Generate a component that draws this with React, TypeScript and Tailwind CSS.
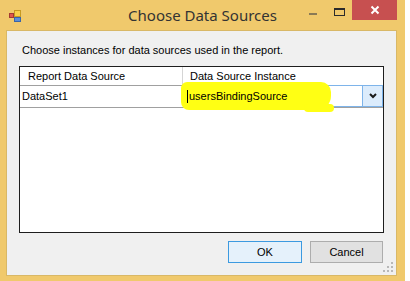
import React from "react";

function FormIcon() {
  return (
    <svg width="13" height="13" viewBox="0 0 13 13">
      <rect x="0.5" y="3.5" width="4" height="4" fill="#e0574c" stroke="#a33a32" />
      <rect x="5.5" y="0.5" width="6" height="6" fill="#f8d04a" stroke="#c79a22" />
      <rect x="5.5" y="7.5" width="6" height="4" fill="#5b8fd6" stroke="#3a64a8" />
    </svg>
  );
}

function SizeGrip() {
  const dots = [
    [8, 0],
    [4, 4],
    [8, 4],
    [0, 8],
    [4, 8],
    [8, 8],
  ];
  return (
    <svg width="11" height="11" viewBox="0 0 11 11">
      {dots.map(([x, y], i) => (
        <rect key={i} x={x} y={y} width="2" height="2" fill="#b8b8b8" />
      ))}
    </svg>
  );
}

export default function App() {
  const ui = { fontFamily: '"Liberation Sans", Arial, sans-serif' };

  return (
    <div className="w-[410px] h-[281px] bg-white overflow-hidden" style={ui}>
      <div className="w-[405px] h-[281px] bg-[#f0c96c] flex flex-col">
        {/* Title bar */}
        <div className="h-[30px] grid grid-cols-[1fr_auto_1fr] items-start shrink-0">
          <div className="pl-[9px] pt-[10px]">
            <FormIcon />
          </div>
          <div
            className="pt-[5px] text-[15px] leading-[20px] text-[#333333]"
            style={{ fontFamily: '"Noto Sans", "Open Sans", sans-serif' }}
          >
            Choose Data Sources
          </div>
          <div className="flex justify-end pr-[8px] items-start">
            <div className="w-[26px] h-[20px] flex items-center justify-center">
              <div className="w-[8px] h-[2px] bg-[#8a7a55] mt-[8px]" />
            </div>
            <div className="w-[26px] h-[20px] flex items-start justify-center pt-[8px]">
              <div className="w-[11px] h-[8px] border border-t-2 border-[#2b2b2b]" />
            </div>
            <div className="w-[45px] h-[20px] bg-[#c75050] flex items-center justify-center">
              <svg width="10" height="10" viewBox="0 0 10 10">
                <path d="M1.5 1.5 L8.5 8.5 M8.5 1.5 L1.5 8.5" stroke="#ffffff" strokeWidth="2" />
              </svg>
            </div>
          </div>
        </div>

        {/* Client area */}
        <div className="ml-[6px] mr-[8px] h-[246px] bg-[#f0f0f0] border border-[#d9b866] relative flex flex-col">
          <div className="pl-[15px] pt-[12px] text-[11px] leading-[14px] text-black">
            Choose instances for data sources used in the report.
          </div>

          {/* Grid */}
          <div className="mt-[9px] ml-[12px] w-[365px] h-[167px] bg-white border border-[#1e1e1e] flex flex-col text-[11px] text-black">
            <div className="h-[19px] flex border-b border-[#a0a0a0]">
              <div className="w-[163px] pl-[8px] border-r border-[#d5d5d5] leading-[19px]">
                Report Data Source
              </div>
              <div className="flex-1 pl-[7px] leading-[19px]">Data Source Instance</div>
            </div>
            <div className="h-[22px] flex border-b border-[#a0a0a0]">
              <div className="w-[163px] pl-[2px] leading-[21px]">DataSet1</div>
              <div className="flex-1 flex border border-[#7eb4ea] h-[22px] -mt-[1px]">
                <div className="flex-1 relative">
                  {/* highlighter mark */}
                  <div className="absolute -left-[3px] -top-[4px] w-[150px] h-[28px] bg-[#ffff14] rounded-[6px_10px_14px_8px]" />
                  <div className="absolute left-[120px] top-[18px] w-[30px] h-[8px] bg-[#ffff14] rounded-[4px]" />
                  <div className="relative pl-[3px] leading-[20px] flex items-center">
                    <span className="w-px h-[13px] bg-black mr-px" />
                    <span>usersBindingSource</span>
                  </div>
                </div>
                <div className="w-[20px] bg-[#dcecfc] border-l border-[#7eb4ea] flex items-center justify-center">
                  <svg width="8" height="6" viewBox="0 0 8 6">
                    <path d="M1 1 L4 4 L7 1" stroke="#1a1a1a" strokeWidth="2" fill="none" />
                  </svg>
                </div>
              </div>
            </div>
          </div>

          {/* Buttons */}
          <div className="mt-[8px] flex justify-end gap-[8px] pr-[13px]">
            <button className="w-[74px] h-[22px] bg-[#e5f1fb] border border-[#3c9ae0] text-[11px] text-black">
              OK
            </button>
            <button className="w-[73px] h-[22px] bg-[#e1e1e1] border border-[#adadad] text-[11px] text-black">
              Cancel
            </button>
          </div>

          <div className="absolute right-[2px] bottom-[2px]">
            <SizeGrip />
          </div>
        </div>
      </div>
    </div>
  );
}
